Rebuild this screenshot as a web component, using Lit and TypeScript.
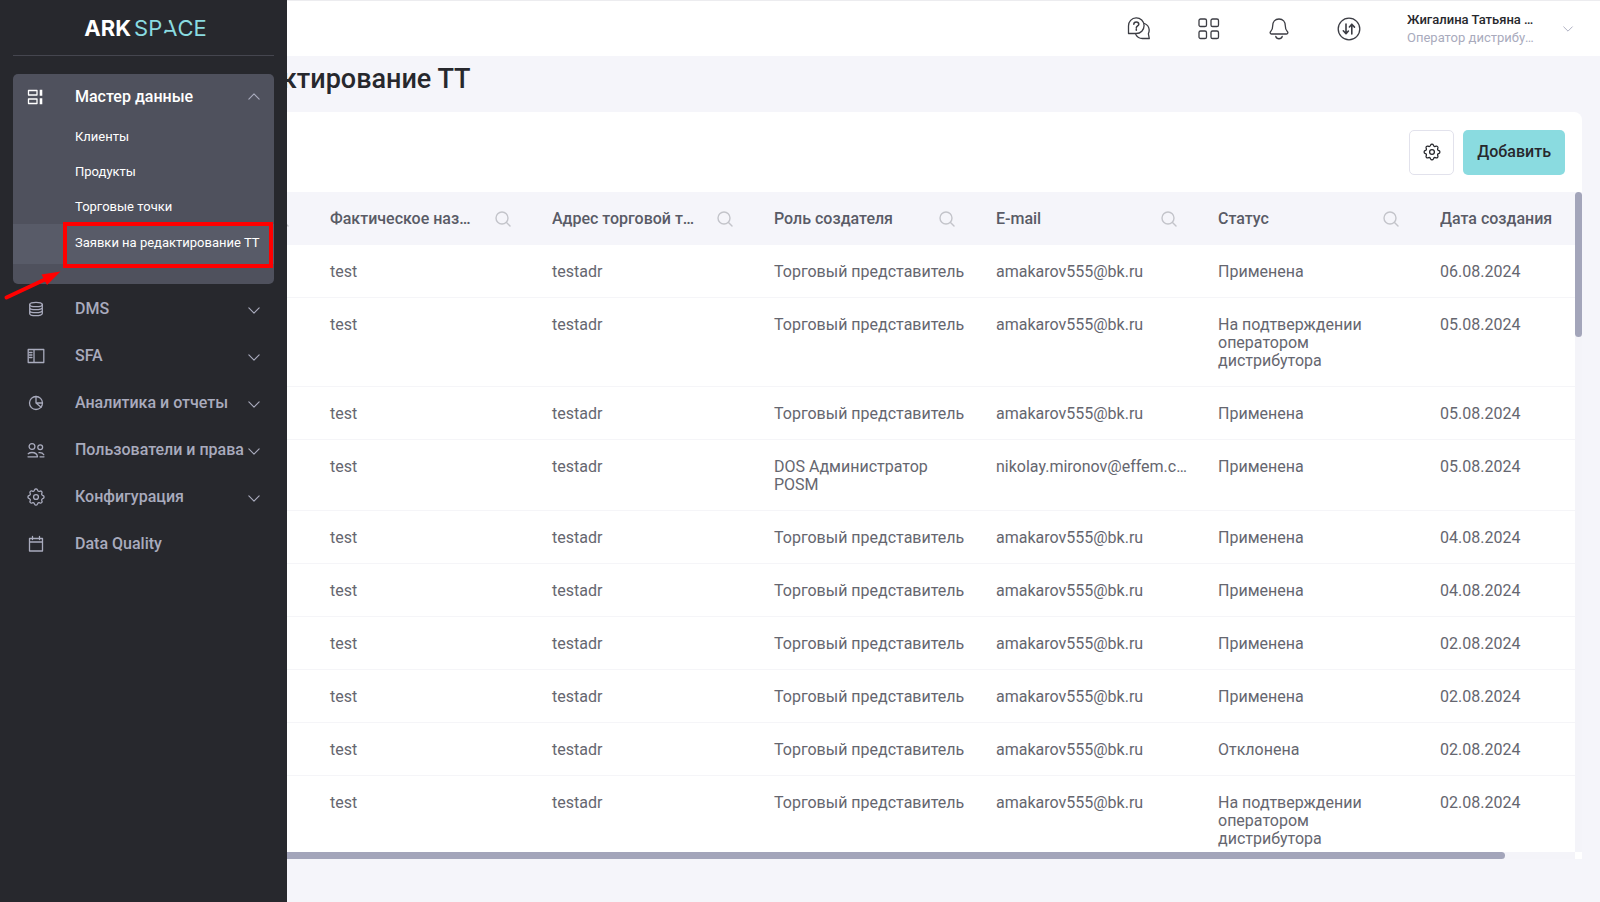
import { LitElement, html, css, svg, nothing } from "lit";
import { customElement, property } from "lit/decorators.js";

const gearPath =
  "M10.3 3.2 A1.9 1.9 0 0 1 13.7 3.2 L14.1 4.1 A1.8 1.8 0 0 0 16.3 5 L17.2 4.7 A1.9 1.9 0 0 1 19.4 6.9 L19 7.8 A1.8 1.8 0 0 0 19.9 9.9 L20.8 10.3 A1.9 1.9 0 0 1 20.8 13.7 L19.9 14.1 A1.8 1.8 0 0 0 19 16.2 L19.4 17.1 A1.9 1.9 0 0 1 17.1 19.4 L16.2 19 A1.8 1.8 0 0 0 14.1 19.9 L13.7 20.8 A1.9 1.9 0 0 1 10.3 20.8 L9.9 19.9 A1.8 1.8 0 0 0 7.8 19 L6.9 19.4 A1.9 1.9 0 0 1 4.6 17.1 L5 16.2 A1.8 1.8 0 0 0 4.1 14.1 L3.2 13.7 A1.9 1.9 0 0 1 3.2 10.3 L4.1 9.9 A1.8 1.8 0 0 0 5 7.8 L4.6 6.9 A1.9 1.9 0 0 1 6.9 4.6 L7.8 5 A1.8 1.8 0 0 0 9.9 4.1 Z";

const shapes: Record<string, unknown> = {
  master: svg`<path d="M1.500 2.500h8.500v4.500h-8.500zM1.500 11h8.500v4.500h-8.500z"/><path d="M14 3v3.500M14 11.500v3.500" stroke-width="2.600" stroke-linecap="square"/>`,
  database: svg`<ellipse cx="9" cy="4.5" rx="6.3" ry="2.2"/><path d="M2.700 4.500v9c0 1.300 2.800 2.200 6.300 2.200s6.300-.9 6.300-2.200v-9M2.700 7.500c0 1.300 2.800 2.200 6.300 2.200s6.300-.9 6.300-2.200M2.700 10.500c0 1.300 2.800 2.200 6.300 2.200s6.300-.9 6.300-2.200"/>`,
  layout: svg`<path d="M1.200 2.500h15.600v13H1.200zM7 2.500v13M2.500 5.500h2.500M2.500 8h2.500M2.500 10.500h2.500"/>`,
  chart: svg`<circle cx="9" cy="9" r="6.500"/><path d="M9 2.500v6.500l5.200 4.200M9 9h6.500"/>`,
  users: svg`<circle cx="5" cy="5.500" r="2.900"/><circle cx="13.200" cy="6.200" r="2.400"/><path d="M1 15.800h9.500c-.3-2.600-2.500-4.300-5.500-4.300-1.500 0-2.800.4-3.800 1.200M12 11.700c2.300-.2 4 .6 4.800 2M13 15.800h4"/>`,
  calendar: svg`<path d="M2.500 3.500h13v12.500h-13zM2.500 7h13M5.500 1.500v3M12.500 1.500v3"/>`,
  gear: svg`<path d=${gearPath} stroke-width="1.600"/><circle cx="12" cy="12" r="3" stroke-width="1.600"/>`,
  search: svg`<circle cx="7" cy="7" r="6" stroke-width="1.400"/><path d="M11.500 11.500l3.500 3.500" stroke-width="1.400"/>`,
  down: svg`<path d="M1 1l6 6 6-6"/>`,
  up: svg`<path d="M1 7l6-6 6 6"/>`,
  help: svg`<path d="M1.500 16.500V9A7.800 7.800 0 1 1 9.300 16.500Z"/><path d="M17.500 6.500A7.500 7.500 0 0 1 22.200 13c0 1.600-.4 2.800-.8 3.800l.9 4.700h-6.800A7.500 7.500 0 0 1 8.800 17.500"/><path d="M6.800 7.200c0-3 5-3 5 0 0 1.700-2.500 1.700-2.500 3.600M9.300 12v1.200" stroke-width="1.500"/>`,
  apps: svg`<rect x="1.500" y="1.500" width="7.500" height="7.500" rx="1.600"/><rect x="13.500" y="1.500" width="7.500" height="7.500" rx="1.600"/><rect x="1.500" y="13.500" width="7.500" height="7.500" rx="1.600"/><rect x="13.500" y="13.500" width="7.500" height="7.500" rx="1.600"/>`,
  bell: svg`<path d="M12 2c-4 0-6.300 3-6.300 6.800 0 4-.8 4.700-2 5.700-1 .9-.6 2.500.8 2.500h15c1.400 0 1.800-1.600.8-2.500-1.200-1-2-1.700-2-5.700C18.300 5 16 2 12 2zM8.800 19.500c.8 3 5.600 3 6.400 0"/>`,
  sync: svg`<circle cx="12" cy="12" r="10.800"/><path d="M9 7v9.500M6.300 13.800L9 16.700l2.400-2.700M14.800 17V7.300M12.400 10l2.400-2.800 2.700 2.900" stroke-width="1.600"/>`,
};

@customElement("ui-icon")
class UiIcon extends LitElement {
  @property() name = "";
  @property() box = "0 0 18 18";
  static styles = css`
    :host { display: inline-block; flex: none; width: 18px; height: 18px; }
    svg { display: block; width: 100%; height: 100%; overflow: visible; fill: none; stroke: currentColor; stroke-width: 1.3; stroke-linejoin: round; stroke-linecap: round; }
  `;
  render() {
    return html`<svg viewBox=${this.box} aria-hidden="true">${shapes[this.name]}</svg>`;
  }
}

interface Section { icon: string; label: string; box?: string; leaf?: boolean }

const sections: Section[] = [
  { icon: "database", label: "DMS" },
  { icon: "layout", label: "SFA" },
  { icon: "chart", label: "Аналитика и отчеты" },
  { icon: "users", label: "Пользователи и права" },
  { icon: "gear", label: "Конфигурация", box: "1 1 22 22" },
  { icon: "calendar", label: "Data Quality", leaf: true },
];

const masterLinks = ["Клиенты", "Продукты", "Торговые точки", "Заявки на редактирование ТТ"];

@customElement("side-nav")
class SideNav extends LitElement {
  static styles = css`
    :host { display: block; box-sizing: border-box; width: 287px; padding: 0 13px; background: #27282d; color: #a9abbd; }
    .logo { display: flex; align-items: center; justify-content: center; height: 56px; box-sizing: border-box; padding-left: 4px; border-bottom: 1px solid #45464f; font: 400 22px/22px "Inter", sans-serif; color: #8adbe0; text-decoration: none; }
    .logo b { font-weight: 700; color: #fff; margin-right: 3px; }
    .cut { clip-path: polygon(46% 0, 100% 0, 100% 100%, 72% 100%, 66% 76%, 8% 76%, 8% 60%, 56% 60%, 40% 14%); }
    .group { margin: 18px 0 1px; padding-bottom: 20px; border-radius: 5px; background: #4f515d; color: #fff; }
    button { display: flex; align-items: center; width: 100%; height: 47px; padding: 0 14px; border: 0; background: none; color: inherit; font: 500 16px/20px "Roboto", sans-serif; text-align: left; white-space: nowrap; }
    .group button { height: 45px; }
    .label { flex: 1; margin-left: 30px; }
    .chev { width: 12px; height: 7px; color: #a9abbd; }
    ul { list-style: none; margin: 0; padding: 0; }
    .sub a { display: block; height: 35px; padding-left: 62px; color: #fff; font: 400 13px/35px "Roboto", sans-serif; text-decoration: none; white-space: nowrap; }
    .sub a.active { height: 40px; line-height: 37px; background: #585b68; }
    .main .chev { margin-top: 3px; }
  `;
  render() {
    return html`
      <a class="logo" href="#"><b>ARK</b>SP<span class="cut">A</span>CE</a>
      <nav>
        <div class="group">
          <button type="button" aria-expanded="true">
            <ui-icon name="master"></ui-icon><span class="label">Мастер данные</span><ui-icon class="chev" name="up" box="0 0 14 8"></ui-icon>
          </button>
          <ul class="sub">
            ${masterLinks.map((t, i) => html`<li><a href="#" class=${i === 3 ? "active" : ""}>${t}</a></li>`)}
          </ul>
        </div>
        <ul class="main">
          ${sections.map((s) => html`<li><button type="button">
            <ui-icon name=${s.icon} box=${s.box ?? "0 0 18 18"}></ui-icon><span class="label">${s.label}</span>
            ${s.leaf ? nothing : html`<ui-icon class="chev" name="down" box="0 0 14 8"></ui-icon>`}
          </button></li>`)}
        </ul>
      </nav>`;
  }
}

const columns = ["", "Фактическое название", "Адрес торговой точки", "Роль создателя", "E-mail", "Статус", "Дата создания"];
const agent = "Торговый представитель";
const mail = "amakarov555@bk.ru";
const pending = "На подтверждении оператором дистрибутора";
const rows: string[][] = [
  [agent, mail, "Применена", "06.08.2024"],
  [agent, mail, pending, "05.08.2024"],
  [agent, mail, "Применена", "05.08.2024"],
  ["DOS Администратор POSM", "nikolay.mironov@effem.com", "Применена", "05.08.2024"],
  [agent, mail, "Применена", "04.08.2024"],
  [agent, mail, "Применена", "04.08.2024"],
  [agent, mail, "Применена", "02.08.2024"],
  [agent, mail, "Применена", "02.08.2024"],
  [agent, mail, "Отклонена", "02.08.2024"],
  [agent, mail, pending, "02.08.2024"],
];

@customElement("request-table")
class RequestTable extends LitElement {
  static styles = css`
    :host { display: grid; grid-template: minmax(0, 1fr) 7px / minmax(0, 1fr) 7px; min-height: 0; font: 400 16px/18px "Roboto", sans-serif; color: #65666f; }
    .view { overflow: hidden; }
    table { table-layout: fixed; width: 1558px; border-collapse: separate; border-spacing: 0; }
    .first { width: 226px; }
    th { height: 53px; box-sizing: border-box; padding: 0 23px 0 18px; background: #f5f5fa; color: #595b66; font-weight: 500; text-align: left; }
    td { padding: 18px 12px 16px 18px; border-bottom: 1px solid #f5f5f8; vertical-align: top; }
    .head { display: flex; align-items: center; justify-content: space-between; }
    .name { width: 146px; overflow: hidden; text-overflow: ellipsis; white-space: nowrap; }
    .mail { overflow: hidden; text-overflow: ellipsis; white-space: nowrap; }
    .find { display: flex; padding: 0; border: 0; background: none; color: #c3c4ca; }
    .find ui-icon { width: 16px; height: 16px; }
    .track { background: #f4f4f9; }
    .thumb { border-radius: 4px; background: #a3a5ba; }
    .vert { height: 22%; }
    .horiz { width: calc(100% - 70px); height: 7px; }
  `;
  render() {
    return html`
      <div class="view">
        <table>
          <colgroup><col class="first"><col><col><col><col><col><col></colgroup>
          <thead><tr>${columns.map((c, i) => html`<th scope="col"><div class="head"><span class="name">${c}</span>
            ${i === 6 ? nothing : html`<button class="find" type="button" aria-label="Поиск"><ui-icon name="search" box="0 0 16 16"></ui-icon></button>`}</div></th>`)}</tr></thead>
          <tbody>${rows.map(([role, email, status, date]) => html`<tr>
            <td></td><td>test</td><td>testadr</td><td>${role}</td><td class="mail">${email}</td><td>${status}</td><td>${date}</td></tr>`)}</tbody>
        </table>
      </div>
      <div class="track"><div class="thumb vert"></div></div>
      <div class="track"><div class="thumb horiz"></div></div>`;
  }
}

@customElement("app-root")
class AppRoot extends LitElement {
  static styles = css`
    :host { display: block; position: relative; height: 100vh; overflow: hidden; background: #f5f5fa; font-family: "Roboto", sans-serif; color: #27282d; }
    .page { display: flex; flex-direction: column; height: 100%; }
    header { display: flex; align-items: center; justify-content: flex-end; flex: none; height: 56px; box-sizing: border-box; padding-right: 27px; border-top: 1px solid #ececef; background: #fff; }
    .tool { display: flex; padding: 0; border: 0; background: none; color: #3c3d44; margin-right: 46px; }
    .tool ui-icon { width: 24px; height: 24px; }
    .user { display: flex; align-items: center; gap: 26px; padding: 0; border: 0; background: none; text-align: left; font: 400 13px/18px "Roboto", sans-serif; color: #a9abbd; }
    .who { display: block; width: 130px; }
    .who span { display: block; overflow: hidden; text-overflow: ellipsis; white-space: nowrap; }
    .who .person { font-weight: 500; color: #27282d; }
    .user ui-icon { width: 10px; height: 6px; }
    main { display: flex; flex-direction: column; flex: 1; min-height: 0; padding: 0 18px 43px 86px; }
    h1 { margin: 0; height: 56px; font: 500 27px/46px "Roboto", sans-serif; box-sizing: border-box; }
    .card { display: flex; flex-direction: column; flex: 1; min-height: 0; background: #fff; border-radius: 8px 8px 0 0; }
    .bar { display: flex; justify-content: flex-end; align-items: center; gap: 9px; flex: none; height: 80px; padding-right: 17px; }
    .square, .add { height: 45px; border-radius: 5px; font: 500 16px/20px "Roboto", sans-serif; color: #27282d; }
    .square { display: flex; align-items: center; justify-content: center; width: 45px; padding: 0; border: 1px solid #e2e2ec; background: #fff; }
    .square ui-icon { width: 16px; height: 16px; }
    .add { padding: 0 14px; border: 0; background: #8adbe0; }
    request-table { flex: 1; }
    side-nav { position: absolute; top: 0; bottom: 0; left: 0; }
    .frame { position: absolute; top: 222px; left: 63px; width: 210px; height: 46px; box-sizing: border-box; border: 4px solid #f00; }
    .arrow { position: absolute; top: 268px; left: 0; width: 64px; height: 34px; }
  `;
  render() {
    return html`
      <div class="page">
        <header>
          <button class="tool" type="button" aria-label="Помощь"><ui-icon name="help" box="0 0 24 24"></ui-icon></button>
          <button class="tool" type="button" aria-label="Приложения"><ui-icon name="apps" box="-0.500 -0.500 24 24"></ui-icon></button>
          <button class="tool" type="button" aria-label="Уведомления"><ui-icon name="bell" box="0 0 24 24"></ui-icon></button>
          <button class="tool" type="button" aria-label="Обмен"><ui-icon name="sync" box="0 0 24 24"></ui-icon></button>
          <button class="user" type="button">
            <span class="who"><span class="person">Жигалина Татьяна Петровна</span><span>Оператор дистрибутора</span></span>
            <ui-icon name="down" box="0 0 14 8"></ui-icon>
          </button>
        </header>
        <main>
          <h1>Заявки на редактирование ТТ</h1>
          <section class="card">
            <div class="bar">
              <button class="square" type="button" aria-label="Настройки"><ui-icon name="gear" box="2 2 20 20"></ui-icon></button>
              <button class="add" type="button">Добавить</button>
            </div>
            <request-table></request-table>
          </section>
        </main>
      </div>
      <side-nav></side-nav>
      <div class="frame"></div>
      <svg class="arrow" viewBox="0 0 64 34" aria-hidden="true">
        <path d="M6.500 29.500L46 11" stroke="#f00" stroke-width="4" stroke-linecap="round"/>
        <path d="M60.500 3.500L41.500 6.500 47 17z" fill="#f00"/>
      </svg>`;
  }
}
